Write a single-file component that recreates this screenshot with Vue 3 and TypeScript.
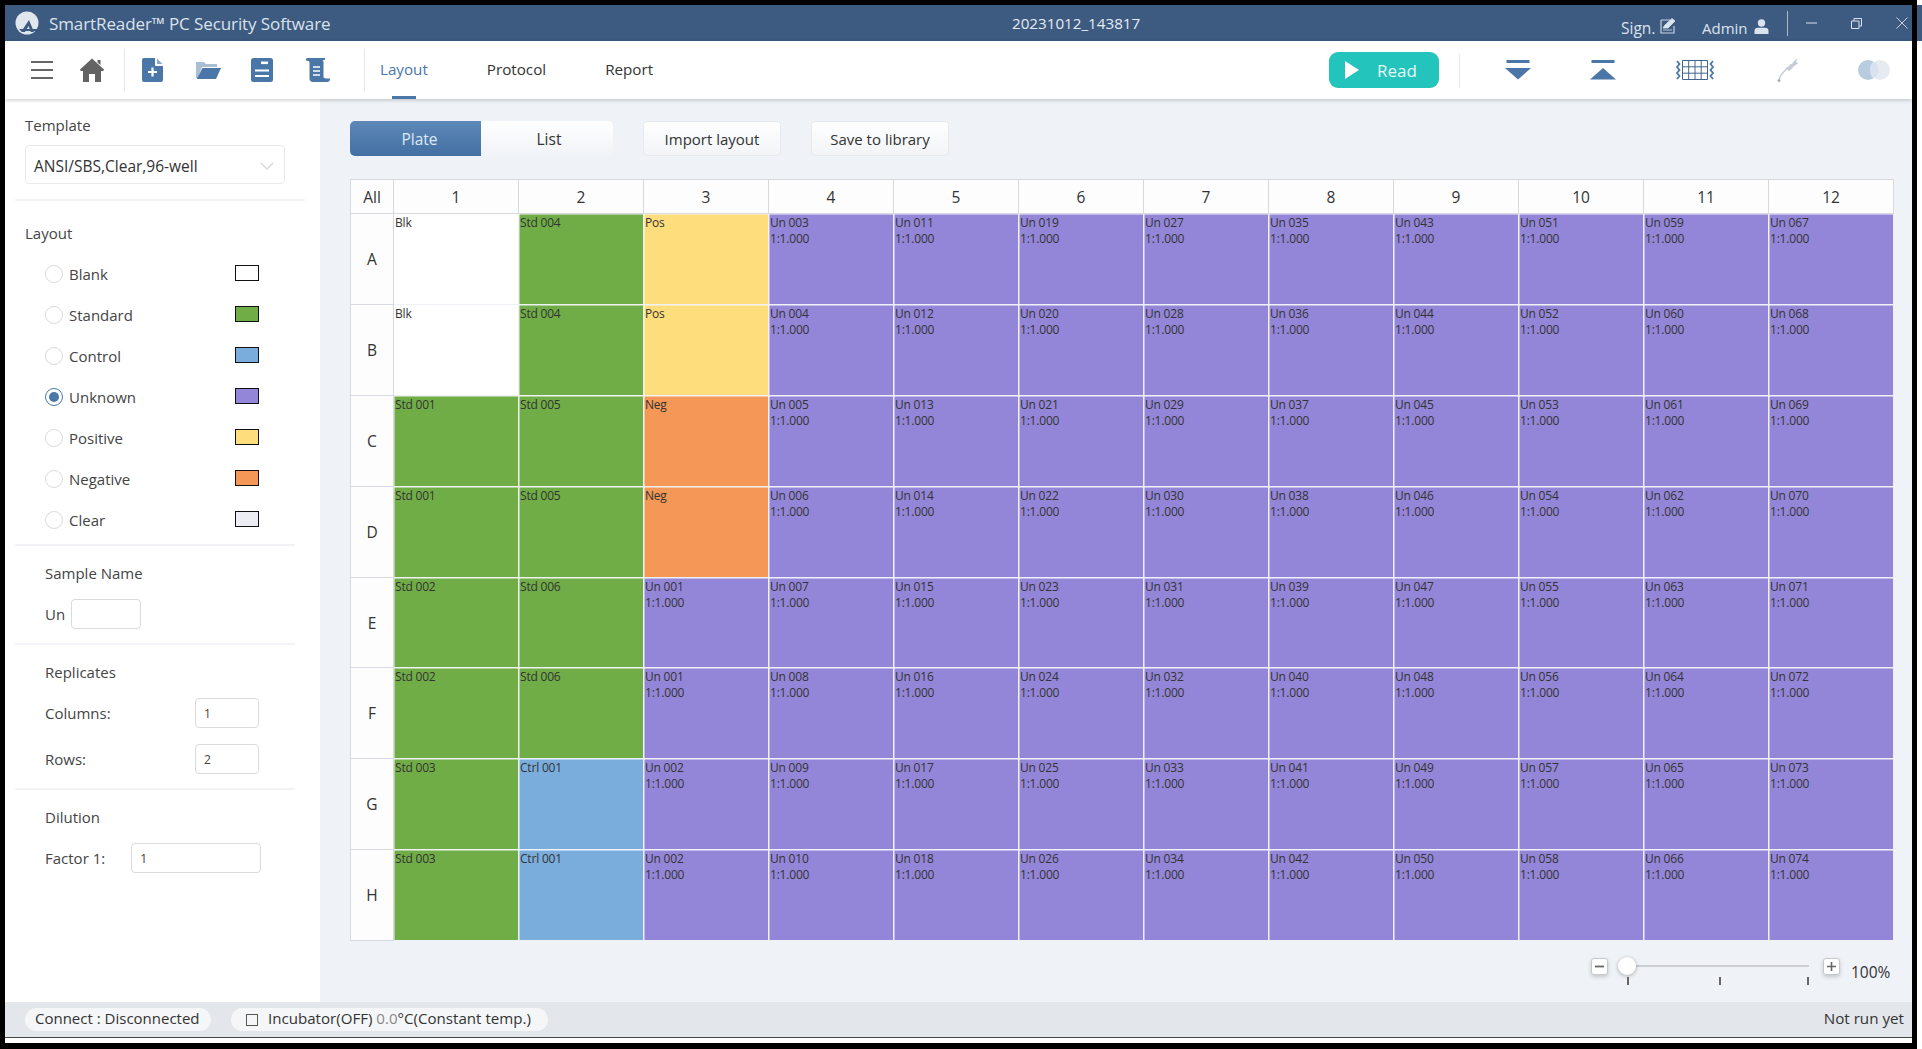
<script setup lang="ts">
interface Well { key: string; cls: string; name: string; ratio: string }

const layoutItems = [
  { label: 'Blank', cls: 'blank', on: false },
  { label: 'Standard', cls: 'std', on: false },
  { label: 'Control', cls: 'ctrl', on: false },
  { label: 'Unknown', cls: 'un', on: true },
  { label: 'Positive', cls: 'pos', on: false },
  { label: 'Negative', cls: 'neg', on: false },
  { label: 'Clear', cls: 'clr', on: false },
]

const rowNames = ['A', 'B', 'C', 'D', 'E', 'F', 'G', 'H']
const colNames = Array.from({ length: 12 }, (_, i) => i + 1)

const pad = (n: number) => String(n).padStart(3, '0')

function wellAt(r: number, c: number): Well {
  const key = rowNames[r] + c
  const grp = Math.floor(r / 2)
  if (c === 1) {
    if (r < 2) return { key, cls: 'blank', name: 'Blk', ratio: '' }
    return { key, cls: 'std', name: 'Std ' + pad(grp), ratio: '' }
  }
  if (c === 2) {
    if (r >= 6) return { key, cls: 'ctrl', name: 'Ctrl 001', ratio: '' }
    return { key, cls: 'std', name: 'Std ' + pad(grp + 4), ratio: '' }
  }
  if (c === 3) {
    if (r < 2) return { key, cls: 'pos', name: 'Pos', ratio: '' }
    if (r < 4) return { key, cls: 'neg', name: 'Neg', ratio: '' }
    return { key, cls: 'un', name: 'Un ' + pad(grp - 1), ratio: '1:1.000' }
  }
  return { key, cls: 'un', name: 'Un ' + pad(3 + (c - 4) * 8 + r), ratio: '1:1.000' }
}

const rows = rowNames.map((name, r) => ({
  name,
  wells: colNames.map((c) => wellAt(r, c)),
}))
</script>

<template>
  <div class="screen">
    <div class="frame">
      <header class="titlebar">
        <svg class="logo" width="26" height="24" viewBox="0 0 26 24">
          <circle cx="12" cy="12" r="11.5" fill="#dfe6ee" />
          <path d="M6 21 L14 9 L19 21 L15.8 21 L13.6 15 L10 21 Z" fill="#3d5a80" />
          <path d="M4 18 L22 18 L24 21 L19 20 L6 20 Z" fill="#3d5a80" />
        </svg>
        <span class="app-name">SmartReader™ PC Security Software</span>
        <span class="run-id">20231012_143817</span>
        <div class="title-right">
          <span class="sign">Sign.</span>
          <svg class="sign-ico" width="16" height="16" viewBox="0 0 16 16">
            <path d="M1 2 H10 M1 2 V15 H14 V8" fill="none" stroke="#c6d2df" stroke-width="1.2" />
            <path d="M3 12 H12 M3 10 L5 7 L12 0.5 L15 3 L8 10 Z" fill="#dbe3ec" stroke="#dbe3ec" stroke-width="0.8" />
          </svg>
          <span class="admin">Admin</span>
          <svg class="admin-ico" width="15" height="15" viewBox="0 0 15 15">
            <circle cx="7.5" cy="4" r="3.7" fill="#dbe3ec" />
            <path d="M0.5 15 V12 Q0.5 8.8 4 8.8 H11 Q14.5 8.8 14.5 12 V15 Z" fill="#dbe3ec" />
          </svg>
          <span class="title-sep"></span>
          <svg class="win win-min" width="11" height="2" viewBox="0 0 11 2"><path d="M0 1 H11" stroke="#dbe3ec" stroke-width="1" /></svg>
          <svg class="win win-max" width="11" height="11" viewBox="0 0 11 11">
            <path d="M0.5 3 H8 V10.5 H0.5 Z M3 3 V0.5 H10.5 V8 H8" fill="none" stroke="#dbe3ec" stroke-width="1" />
          </svg>
          <svg class="win win-close" width="12" height="12" viewBox="0 0 12 12">
            <path d="M0.5 0.5 L11.5 11.5 M11.5 0.5 L0.5 11.5" stroke="#c6d2df" stroke-width="1" />
          </svg>
        </div>
      </header>

      <nav class="toolbar">
        <div class="hamburger"><i></i><i></i><i></i></div>
        <svg class="home" width="24" height="24" viewBox="0 0 24 24">
          <path d="M12 0.5 L24 11.5 Q24 13 22.5 13 L21 13 V24 H15 V16 H9 V24 H3 V13 L1.5 13 Q0 13 0 11.5 Z M17.5 2 H20.5 V7 L17.5 4.5 Z" fill="#636363" />
        </svg>
        <span class="tool-sep first"></span>
        <svg class="t-new" width="21" height="24" viewBox="0 0 21 24">
          <path d="M2 0 H13 V7 Q13 8 14 8 H21 V22 Q21 24 19 24 H2 Q0 24 0 22 V2 Q0 0 2 0 Z" fill="#4a76a8" />
          <path d="M15 0.5 L20.5 6 H15 Z" fill="#8aa8c8" />
          <path d="M6 14 H15 M10.5 9.5 V18.5" stroke="#fff" stroke-width="2.2" />
        </svg>
        <svg class="t-open" width="25" height="18" viewBox="0 0 25 18">
          <path d="M0 17 V1 H8 L10 3 H21 V6 H6 L2 17 Z" fill="#a9bfd6" />
          <path d="M6.5 7 H25 L20 18 H0.8 Z" fill="#4a76a8" />
        </svg>
        <svg class="t-save" width="22" height="24" viewBox="0 0 22 24">
          <rect width="22" height="24" rx="2.5" fill="#4a76a8" />
          <rect x="10" y="3.5" width="7" height="2.6" fill="#fff" />
          <path d="M4 12.5 H18 M4 18 H18" stroke="#fff" stroke-width="1.8" />
        </svg>
        <svg class="t-script" width="24" height="24" viewBox="0 0 24 24">
          <path d="M0 1 Q0 0 2 0 H19 L19 2 H16 Q17.5 2 17.5 4 V19 Q18 21 24 20.5 Q24 24 21 24 H7 Q4 24 3.5 21 V4 Q3.5 3 0 2.6 Z" fill="#4a76a8" />
          <path d="M7 9 H14 M7 13 H14 M7 17 H14" stroke="#fff" stroke-width="1.5" />
        </svg>
        <span class="tool-sep second"></span>
        <a class="tab layout-tab">Layout</a>
        <a class="tab protocol-tab">Protocol</a>
        <a class="tab report-tab">Report</a>
        <button class="read-btn">
          <svg width="14" height="18" viewBox="0 0 14 18"><path d="M0 0 L14 9 L0 18 Z" fill="#fff" /></svg>
          <span>Read</span>
        </button>
        <span class="tool-sep third"></span>
        <svg class="t-down" width="26" height="20" viewBox="0 0 26 20">
          <rect x="1.5" width="23" height="3" fill="#4a76a8" />
          <path d="M0 8 H26 L13 19.5 Z" fill="#4a76a8" />
        </svg>
        <svg class="t-up" width="26" height="20" viewBox="0 0 26 20">
          <rect x="1.5" width="23" height="3" fill="#4a76a8" />
          <path d="M0 19.5 H26 L13 8 Z" fill="#4a76a8" />
        </svg>
        <svg class="t-plate" width="40" height="20" viewBox="0 0 40 20">
          <path d="M7.5 0.5 H32.5 V19.5 H7.5 Z M7.5 6.8 H32.5 M7.5 13.2 H32.5 M13.7 0.5 V19.5 M20 0.5 V19.5 M26.2 0.5 V19.5" fill="none" stroke="#41648c" stroke-width="1" />
          <path d="M2 1 L4.5 4 L2 7 L4.5 10 L2 13 L4.5 16 L2 19 M38 1 L35.5 4 L38 7 L35.5 10 L38 13 L35.5 16 L38 19" fill="none" stroke="#4a76a8" stroke-width="1.8" />
        </svg>
        <svg class="t-pip" width="22" height="24" viewBox="0 0 22 24">
          <path d="M2 22 L4 17 L11 9" fill="none" stroke="#c5ccd4" stroke-width="1.4" />
          <path d="M9.5 11 L13 6.5 L15 6 L17 3 L20.5 0.5 L19 4 L21.5 5 L16.5 8.5 L15 10.5 L12 13 Z" fill="#c5ccd4" />
          <circle cx="2" cy="22.5" r="1.5" fill="#a7b0ba" />
        </svg>
        <svg class="t-circles" width="32" height="20" viewBox="0 0 32 20">
          <circle cx="22" cy="10" r="10" fill="#e6ebf2" />
          <circle cx="10" cy="10" r="10" fill="#b8cce0" />
          <ellipse cx="16" cy="10" rx="4" ry="8" fill="#d9e3ee" />
        </svg>
      </nav>

      <div class="content">
        <aside class="sidebar">
          <section class="sec sec-template">
            <div class="sec-title">Template</div>
            <div class="select">
              <span>ANSI/SBS,Clear,96-well</span>
              <svg width="14" height="8" viewBox="0 0 14 8"><path d="M1 1 L7 7 L13 1" fill="none" stroke="#d5d8dc" stroke-width="1.3" /></svg>
            </div>
          </section>
          <section class="sec sec-layout">
            <div class="sec-title">Layout</div>
            <div v-for="item in layoutItems" :key="item.label" class="radio-row">
              <span class="radio" :class="{ on: item.on }"></span>
              <span class="radio-label">{{ item.label }}</span>
              <span class="swatch" :class="item.cls"></span>
            </div>
          </section>
          <section class="sec sec-sample">
            <div class="sec-sub">Sample Name</div>
            <div class="field un-field">
              <span>Un</span>
              <input class="inp un-inp" type="text" value="" />
            </div>
          </section>
          <section class="sec sec-rep">
            <div class="sec-sub">Replicates</div>
            <div class="field between">
              <span>Columns:</span>
              <input class="inp num-inp" type="text" value="1" />
            </div>
            <div class="field between rows-field">
              <span>Rows:</span>
              <input class="inp num-inp" type="text" value="2" />
            </div>
          </section>
          <section class="sec sec-dil">
            <div class="sec-sub">Dilution</div>
            <div class="field factor-field">
              <span>Factor 1:</span>
              <input class="inp factor-inp" type="text" value="1" />
            </div>
          </section>
        </aside>

        <main class="main">
          <div class="actions">
            <div class="switch">
              <span class="sw active">Plate</span>
              <span class="sw list">List</span>
            </div>
            <button class="act import">Import layout</button>
            <button class="act save">Save to library</button>
          </div>

          <div class="plate">
            <div class="head corner">All</div>
            <div v-for="c in colNames" :key="c" class="head col-head">{{ c }}</div>
            <template v-for="row in rows" :key="row.name">
              <div class="head row-head">{{ row.name }}</div>
              <div v-for="w in row.wells" :key="w.key" class="well" :class="w.cls">
                <div>{{ w.name }}</div>
                <div v-if="w.ratio">{{ w.ratio }}</div>
              </div>
            </template>
          </div>

          <div class="zoom">
            <span class="zbtn">
              <svg width="11" height="11" viewBox="0 0 11 11"><path d="M1 5.5 H10" stroke="#666" stroke-width="1.8" /></svg>
            </span>
            <div class="slider">
              <div class="track"></div>
              <div class="thumb"></div>
              <div class="ticks"><i></i><i></i><i></i></div>
            </div>
            <span class="zbtn">
              <svg width="11" height="11" viewBox="0 0 11 11"><path d="M1 5.5 H10 M5.5 1 V10" stroke="#666" stroke-width="1.6" /></svg>
            </span>
            <span class="pct">100%</span>
          </div>
        </main>
      </div>

      <footer class="status">
        <span class="pill conn">Connect : Disconnected</span>
        <span class="pill incu">
          <i class="check"></i>
          <span>Incubator(OFF) <b>0.0</b>°C(Constant temp.)</span>
        </span>
        <span class="not-run">Not run yet</span>
      </footer>
      <div class="base"></div>
    </div>
    <div class="edge"></div>
  </div>
</template>

<style>
html, body { margin: 0; padding: 0; background: #fff; }
</style>

<style scoped>
* { box-sizing: border-box; }
.screen {
  width: 1922px; height: 1049px; display: flex; align-items: flex-start; overflow: hidden;
  background: #fff; font-family: "Open Sans", "Noto Sans", sans-serif; color: #333;
}
.edge { width: 5px; height: 36px; margin-top: 5px; background: #3d5a80; }
.frame {
  width: 1917px; height: 1049px; display: flex; flex-direction: column; flex: none;
  border: 5px solid #000; border-bottom-width: 6px; background: #fff;
}

/* title bar */
.titlebar { height: 36px; flex: none; background: #3d5a80; color: #dbe3ec; display: flex; align-items: center; position: relative; padding-left: 10px; }
.logo { flex: none; }
.app-name { font-size: 17px; margin-left: 8px; letter-spacing: -0.1px; white-space: nowrap; }
.run-id { position: absolute; left: 1007px; top: 8px; font-size: 15.2px; line-height: 20px; color: #e6ebf2; }
.title-right { position: absolute; inset: 0 0 0 auto; width: 300px; }
.title-right > * { position: absolute; }
.sign { left: 9px; top: 13px; font-size: 15.5px; line-height: 20px; }
.sign-ico { left: 48px; top: 13px; }
.admin { left: 90px; top: 13px; font-size: 15px; line-height: 20px; }
.admin-ico { left: 142px; top: 14px; }
.title-sep { left: 175px; top: 6px; width: 1px; height: 25px; background: #a9b9cb; }
.win-min { left: 194px; top: 17px; }
.win-max { left: 239px; top: 13px; }
.win-close { left: 284px; top: 12px; }

/* toolbar */
.toolbar { height: 58px; flex: none; background: #fff; display: flex; align-items: center; position: relative; z-index: 2; box-shadow: 0 1px 4px rgba(0,0,0,.22); }
.hamburger { margin-left: 26px; width: 22px; height: 18px; display: flex; flex-direction: column; justify-content: space-between; }
.hamburger i { display: block; height: 2px; background: #666; }
.home { margin-left: 27px; }
.tool-sep { width: 1px; height: 42px; background: #e6e8ec; flex: none; }
.tool-sep.first { margin-left: 20px; }
.t-new { margin-left: 17px; }
.t-open { margin-left: 33px; }
.t-save { margin-left: 30px; }
.t-script { margin-left: 33px; }
.tool-sep.second { margin-left: 34px; }
.tab { font-size: 15.2px; line-height: 57px; height: 58px; color: #333; position: relative; }
.layout-tab { margin-left: 15px; color: #4a76a8; }
.layout-tab::after { content: ""; position: absolute; left: 12px; bottom: 0; width: 24px; height: 3px; background: #4a76a8; }
.protocol-tab { margin-left: 59px; }
.report-tab { margin-left: 59px; }
.read-btn {
  position: absolute; left: 1324px; top: 11px; width: 110px; height: 36px; padding: 0 0 0 16px; border: 0; border-radius: 9px;
  background: #22c4bb; color: #e9f9f8; display: flex; align-items: center; font: inherit; font-size: 17px;
}
.read-btn span { margin-left: 18px; }
.tool-sep.third { position: absolute; left: 1454px; top: 13px; height: 34px; }
.t-down, .t-up, .t-plate, .t-pip, .t-circles { position: absolute; }
.t-down { left: 1500px; top: 19px; }
.t-up { left: 1585px; top: 19px; }
.t-plate { left: 1670px; top: 19px; }
.t-pip { left: 1772px; top: 17px; }
.t-circles { left: 1853px; top: 19px; }

/* body */
.content { flex: 1; min-height: 0; display: flex; background: #eff2f6; }
.sidebar { width: 315px; flex: none; background: #fff; padding: 0 25px 0 10px; font-size: 15px; color: #444; }
.sec { border-bottom: 2px solid #f1f3f6; }
.sec:last-child { border-bottom: 0; }
.sec-title { padding: 15px 0 0 10px; line-height: 22px; height: 36px; }
.sec-template { height: 102px; margin-right: -10px; }
.select {
  margin: 10px 0 0 10px; width: 260px; height: 39px; border: 1px solid #e8eaed; border-radius: 4px;
  display: flex; align-items: center; justify-content: space-between; padding: 2px 10px 0 8px; color: #333; font-size: 15.5px;
}
.sec-layout { height: 345px; }
.sec-layout .sec-title { padding-top: 21px; height: 52px; }
.radio-row { height: 41px; display: flex; align-items: center; padding-left: 30px; }
.radio { width: 18px; height: 18px; flex: none; border-radius: 50%; border: 1px solid #d9dbde; background: #fff; position: relative; }
.radio.on { border-color: #4a76a8; }
.radio.on::after { content: ""; position: absolute; inset: 3px; border-radius: 50%; background: #4a76a8; }
.radio-label { margin-left: 6px; flex: 1; }
.swatch { width: 24px; height: 16px; flex: none; border: 1px solid #111; margin-right: 36px; margin-top: -2px; }
.sec-sample { height: 99px; padding: 16px 0 0 30px; }
.sec-rep { height: 145px; padding: 16px 0 0 30px; }
.sec-dil { padding: 16px 0 0 30px; }
.sec-sub { line-height: 22px; height: 22px; }
.field { display: flex; align-items: center; height: 30px; margin-top: 15px; }
.un-field { margin-top: 15px; }
.between { justify-content: space-between; width: 214px; }
.rows-field { margin-top: 16px; }
.inp { border: 1px solid #d9dbde; border-radius: 4px; background: #fff; height: 30px; padding: 0 8px; font: inherit; font-size: 12px; color: #444; outline: none; }
.un-inp { margin-left: 6px; width: 70px; }
.num-inp { width: 64px; }
.factor-field { margin-top: 15px; }
.factor-inp { width: 130px; margin-left: 26px; }

.main { flex: 1; min-width: 0; padding: 22px 18px 0 30px; }
.actions { display: flex; height: 35px; align-items: stretch; }
.switch { display: flex; width: 263px; border-radius: 5px; overflow: hidden; }
.sw { flex: none; width: 132px; display: flex; align-items: center; justify-content: center; font-size: 15.5px; background: linear-gradient(#fff, #f0f3f7); color: #333; padding-left: 4px; }
.sw.active { width: 131px; background: linear-gradient(#5d88b8, #4370a4); color: #dfe9f3; padding-left: 8px; }
.act { border: 1px solid #e6e9ed; border-radius: 4px; background: linear-gradient(#fff, #f2f4f7); font: inherit; font-size: 15px; color: #333; width: 138px; padding: 0; }
.import { margin-left: 30px; }
.save { margin-left: 30px; }

.plate {
  margin-top: 23px; display: grid; width: 1544px;
  grid-template-columns: 43px repeat(12, 125px);
  grid-template-rows: 34px repeat(8, 90.9px);
  border: 1px solid #d6dae0; border-width: 1px 0 0 1px; background: #fff;
}
.head { display: flex; align-items: center; justify-content: center; font-size: 15.5px; color: #333; background: #fdfdfe; border-right: 1px solid #d6dae0; border-bottom: 1px solid #d6dae0; }
.well { font-size: 12px; line-height: 16px; padding: 1px 0 0 1px; border-right: 1px solid #eef1f5; border-bottom: 1px solid #eef1f5; box-shadow: inset 1px 0 rgba(255,255,255,.45), inset 0 1px rgba(255,255,255,.45); color: #333; white-space: nowrap; overflow: hidden; letter-spacing: -0.2px; }
.blank { background: #fff; }
.std { background: #70ad47; }
.ctrl { background: #7aacdc; }
.un { background: #9386d8; }
.pos { background: #fedd7c; }
.neg { background: #f49757; }
.clr { background: #eceef4; }

.zoom { position: relative; height: 40px; margin-top: 15px; }
.zoom > * { position: absolute; }
.zbtn { width: 17px; height: 17px; top: 2px; background: #fff; border: 1px solid #c6c9ce; border-radius: 3px; display: flex; align-items: center; justify-content: center; box-shadow: 0 2px 4px rgba(0,0,0,.18); }
.zbtn:nth-child(1) { left: 1241px; }
.zbtn:nth-child(3) { left: 1473px; }
.slider { left: 1267px; top: 0; width: 194px; height: 40px; }
.track { position: absolute; left: 10px; right: 2px; top: 9px; height: 2px; background: #ccced2; }
.thumb { position: absolute; left: 1px; top: 1px; width: 18px; height: 18px; border-radius: 50%; background: #fff; box-shadow: 0 1px 4px rgba(0,0,0,.3); }
.ticks i { position: absolute; top: 21px; width: 2px; height: 8px; background: #666; }
.ticks i:nth-child(1) { left: 10px; }
.ticks i:nth-child(2) { left: 102px; }
.ticks i:nth-child(3) { left: 190px; }
.pct { left: 1501px; top: 6px; font-size: 15.5px; line-height: 20px; color: #333; }

/* status */
.status { height: 35px; flex: none; background: #e3e6ea; display: flex; align-items: center; padding-left: 20px; position: relative; font-size: 15px; color: #333; }
.pill { height: 23px; border-radius: 12px; background: #f5f6f8; display: flex; align-items: center; flex: none; line-height: 21px; padding-bottom: 2px; }
.conn { width: 186px; padding-left: 10px; font-size: 15px; }
.incu { width: 317px; margin-left: 20px; padding-left: 15px; font-size: 15.1px; }
.check { width: 12px; height: 12px; border: 1px solid #555; flex: none; margin-right: 10px; margin-top: 2px; }
.incu b { font-weight: 400; color: #888; }
.not-run { position: absolute; right: 8px; top: 6px; line-height: 20px; font-size: 15.2px; }
.base { height: 6px; flex: none; border-top: 1px solid #444; background: #fff; }
</style>
